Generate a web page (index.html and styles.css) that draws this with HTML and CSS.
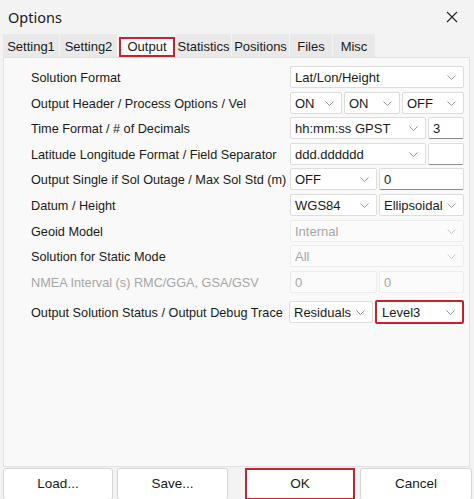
FILE: index.html
```html
<!DOCTYPE html>
<html lang="en">
<head>
  <meta charset="UTF-8" />
  <title>Options</title>
  <link rel="stylesheet" href="styles.css">
</head>
<body>
  <div class="window">
    <div class="titlebar">
      <span class="title">Options</span>
      <svg class="close" width="12" height="12" viewBox="0 0 12 12">
        <path d="M1 1 L11 11 M11 1 L1 11" stroke="#222" stroke-width="1.1" fill="none"/>
      </svg>
    </div>

    <div class="tabs">
      <div class="tab t1">Setting1</div>
      <div class="tab t2">Setting2</div>
      <div class="tab active">Output</div>
      <div class="tab t4">Statistics</div>
      <div class="tab t5">Positions</div>
      <div class="tab files">Files</div>
      <div class="tab misc">Misc</div>
    </div>

    <div class="panel">
      <div class="form">
        <div class="label">Solution Format</div>
        <div class="ctrls">
          <div class="sel grow"><span>Lat/Lon/Height</span><svg class="chev" viewBox="0 0 9 5"><path d="M0.5 0.5 L4.5 4.5 L8.5 0.5"/></svg></div>
        </div>

        <div class="label">Output Header / Process Options / Vel</div>
        <div class="ctrls">
          <div class="sel w52"><span>ON</span><svg class="chev" viewBox="0 0 9 5"><path d="M0.5 0.5 L4.5 4.5 L8.5 0.5"/></svg></div>
          <div class="sel w55"><span>ON</span><svg class="chev" viewBox="0 0 9 5"><path d="M0.5 0.5 L4.5 4.5 L8.5 0.5"/></svg></div>
          <div class="sel grow"><span>OFF</span><svg class="chev" viewBox="0 0 9 5"><path d="M0.5 0.5 L4.5 4.5 L8.5 0.5"/></svg></div>
        </div>

        <div class="label">Time Format / # of Decimals</div>
        <div class="ctrls">
          <div class="sel w135"><span>hh:mm:ss GPST</span><svg class="chev" viewBox="0 0 9 5"><path d="M0.5 0.5 L4.5 4.5 L8.5 0.5"/></svg></div>
          <div class="edit grow">3</div>
        </div>

        <div class="label">Latitude Longitude Format / Field Separator</div>
        <div class="ctrls">
          <div class="sel w135"><span>ddd.dddddd</span><svg class="chev" viewBox="0 0 9 5"><path d="M0.5 0.5 L4.5 4.5 L8.5 0.5"/></svg></div>
          <div class="edit grow"></div>
        </div>

        <div class="label">Output Single if Sol Outage / Max Sol Std (m)</div>
        <div class="ctrls">
          <div class="sel w86"><span>OFF</span><svg class="chev" viewBox="0 0 9 5"><path d="M0.5 0.5 L4.5 4.5 L8.5 0.5"/></svg></div>
          <div class="edit grow">0</div>
        </div>

        <div class="label">Datum / Height</div>
        <div class="ctrls">
          <div class="sel w86"><span>WGS84</span><svg class="chev" viewBox="0 0 9 5"><path d="M0.5 0.5 L4.5 4.5 L8.5 0.5"/></svg></div>
          <div class="sel grow"><span>Ellipsoidal</span><svg class="chev" viewBox="0 0 9 5"><path d="M0.5 0.5 L4.5 4.5 L8.5 0.5"/></svg></div>
        </div>

        <div class="label">Geoid Model</div>
        <div class="ctrls">
          <div class="sel grow disabled"><span>Internal</span><svg class="chev" viewBox="0 0 9 5"><path d="M0.5 0.5 L4.5 4.5 L8.5 0.5"/></svg></div>
        </div>

        <div class="label">Solution for Static Mode</div>
        <div class="ctrls">
          <div class="sel grow disabled"><span>All</span><svg class="chev" viewBox="0 0 9 5"><path d="M0.5 0.5 L4.5 4.5 L8.5 0.5"/></svg></div>
        </div>

        <div class="label dim">NMEA Interval (s) RMC/GGA, GSA/GSV</div>
        <div class="ctrls">
          <div class="edit w86 disabled">0</div>
          <div class="edit grow disabled">0</div>
        </div>

        <div class="label last">Output Solution Status / Output Debug Trace</div>
        <div class="ctrls last">
          <div class="sel w84"><span>Residuals</span><svg class="chev" viewBox="0 0 9 5"><path d="M0.5 0.5 L4.5 4.5 L8.5 0.5"/></svg></div>
          <div class="sel grow marked"><span>Level3</span><svg class="chev" viewBox="0 0 9 5"><path d="M0.5 0.5 L4.5 4.5 L8.5 0.5"/></svg></div>
        </div>
      </div>
    </div>

    <div class="buttons">
      <button class="btn load">Load...</button>
      <button class="btn save">Save...</button>
      <button class="btn ok">OK</button>
      <button class="btn cancel">Cancel</button>
    </div>
  </div>
</body>
</html>
```

FILE: styles.css
```css
body {
  margin: 0;
  background: #f3f3f3;
  font-family: 'Liberation Sans', Arial, sans-serif;
  font-size: 12.7px;
  color: #1a1a1a;
}

.window {
  width: 474px;
  height: 499px;
  overflow: hidden;
  background: #f3f3f3;
}

.titlebar {
  height: 34px;
  display: flex;
  align-items: center;
  justify-content: space-between;
  padding: 0 16px 0 8px;
}

.title {
  font-family: 'Noto Sans', sans-serif;
  font-size: 14.5px;
  color: #1a1a1a;
}

.close {
  display: block;
}

.tabs {
  display: flex;
  height: 23px;
  margin: 0 0 0 3px;
  gap: 1px;
}

.tab {
  background: #e9e9e9;
  line-height: 25px;
  font-size: 13px;
  color: #1a1a1a;
  box-sizing: border-box;
  text-align: center;
  white-space: nowrap;
}

.t1 { width: 56px; }
.t2 { width: 57px; }
.t4 { width: 55px; }
.t5 { width: 57px; }

.tab.active {
  width: 56px;
  background: #fbfbfb;
  border: 2px solid #c8202c;
  line-height: 16px;
  height: 20px;
  margin-top: 3px;
  margin-left: 1px;
}

.tab.files { width: 42px; }
.tab.misc { width: 42px; }

.panel {
  margin: 0 4px 0 3px;
  height: 410px;
  box-sizing: border-box;
  background: #f9f9f9;
  border: 1px solid #e2e2e2;
  padding: 8px 5px 0 27px;
}

.form {
  display: grid;
  grid-template-columns: minmax(0, 1fr) 174px;
  row-gap: 3.6px;
  align-items: center;
}

.label {
  white-space: nowrap;
  height: 22px;
  line-height: 25px;
}

.label.dim {
  color: #a6a6a6;
}

.label.last,
.ctrls.last {
  margin-top: 5px;
}

.ctrls {
  display: flex;
  gap: 2px;
  height: 22px;
  font-size: 13px;
}

.ctrls.last {
  margin-left: -1px;
}

.sel,
.edit {
  box-sizing: border-box;
  height: 22px;
  background: #ffffff;
  border: 1px solid #dddddd;
  border-radius: 2px;
  display: flex;
  align-items: center;
  padding: 1px 4px 0 4px;
  white-space: nowrap;
  overflow: hidden;
}

.sel span {
  flex: 1;
}

.edit {
  border-bottom: 1px solid #8c8c8c;
}

.chev {
  width: 9px;
  height: 5px;
  margin-right: 3px;
  flex: none;
}

.chev path {
  fill: none;
  stroke: #8a8a8a;
  stroke-width: 0.9;
}

.disabled {
  background: #fbfbfb;
  border-color: #ececec;
  color: #a6a6a6;
}

.disabled .chev path {
  stroke: #c4c4c4;
}

.marked {
  border: 2px solid #c8202c;
  height: 24px;
  margin-top: -1px;
  padding-left: 5px;
}

.grow { flex: 1; }
.w52 { width: 52px; flex: none; }
.w55 { width: 56px; flex: none; }
.w84 { width: 84px; flex: none; }
.w86 { width: 87px; flex: none; }
.w135 { width: 136px; flex: none; }

.buttons {
  display: flex;
  height: 32px;
  padding-top: 1px;
}

.btn {
  box-sizing: border-box;
  height: 32px;
  background: #ffffff;
  border: 1px solid #d6d6d6;
  border-radius: 3px;
  font-family: 'Liberation Sans', Arial, sans-serif;
  font-size: 13.5px;
  color: #1a1a1a;
  padding: 0 0 2px 0;
}

.load { width: 110px; margin-left: 3px; }
.save { width: 111px; margin-left: 4px; }
.ok { width: 110px; margin-left: 17px; border: 2px solid #c8202c; border-radius: 0; }
.cancel { width: 112px; margin-left: 5px; }
```
